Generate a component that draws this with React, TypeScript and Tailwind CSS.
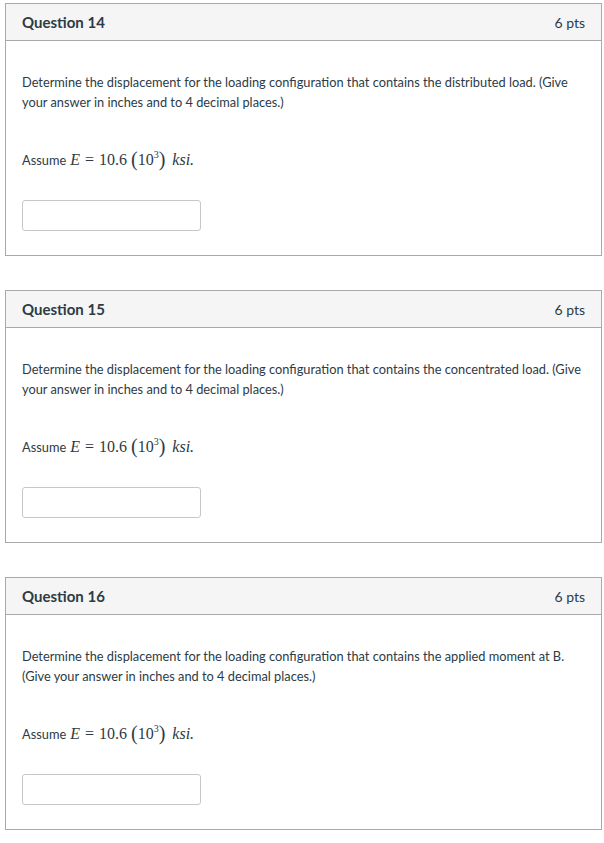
import React from 'react'

type Question = {
  num: number
  text: string
}

const questions: Question[] = [
  {
    num: 14,
    text: 'Determine the displacement for the loading configuration that contains the distributed load. (Give your answer in inches and to 4 decimal places.)',
  },
  {
    num: 15,
    text: 'Determine the displacement for the loading configuration that contains the concentrated load. (Give your answer in inches and to 4 decimal places.)',
  },
  {
    num: 16,
    text: 'Determine the displacement for the loading configuration that contains the applied moment at B. (Give your answer in inches and to 4 decimal places.)',
  },
]

function MathE() {
  // KaTeX-ish rendering of  E = 10.6 (10^3) ksi.
  return (
    <span
      className="inline-flex items-baseline text-[16px] text-[#2d3b45]"
      style={{ fontFamily: "'Liberation Serif', 'DejaVu Serif', serif" }}
    >
      <i>E</i>
      <span className="ml-[5px]">=</span>
      <span className="ml-[5px]">10.6</span>
      <span className="ml-[4px] text-[20px] leading-none relative top-[1px]">(</span>
      <span>10</span>
      <span className="text-[10px] relative -top-[7px]">3</span>
      <span className="text-[20px] leading-none relative top-[1px]">)</span>
      <i className="ml-[7px]">ksi.</i>
    </span>
  )
}

function QuestionCard({ q }: { q: Question }) {
  return (
    <div className="border border-[#a9a9a9] bg-white">
      <div className="flex items-center justify-between h-[37px] px-4 bg-[#f5f5f5] border-b border-[#a9a9a9]">
        <span className="text-[15px] font-bold text-[#2d3b45]">Question {q.num}</span>
        <span className="text-[14px] text-[#2d3b45]">6 pts</span>
      </div>
      <div className="px-4 pt-[31px] pb-[24px] text-[12.8px] leading-[20px] text-[#2d3b45]">
        <p>{q.text}</p>
        <p className="mt-[36px] flex items-baseline gap-[4px] h-[20px]">
          <span>Assume</span>
          <MathE />
        </p>
        <div className="mt-[32px] w-[179px] h-[31px] rounded-[3px] border border-[#c7c7c7] bg-white" />
      </div>
    </div>
  )
}

export default function App() {
  return (
    <div
      className="min-h-[843px] bg-white pt-[3px] pl-[5px] pr-[2px] flex flex-col gap-[34px]"
      style={{ fontFamily: "Lato, 'Noto Sans', sans-serif" }}
    >
      {questions.map(q => (
        <QuestionCard key={q.num} q={q} />
      ))}
    </div>
  )
}
